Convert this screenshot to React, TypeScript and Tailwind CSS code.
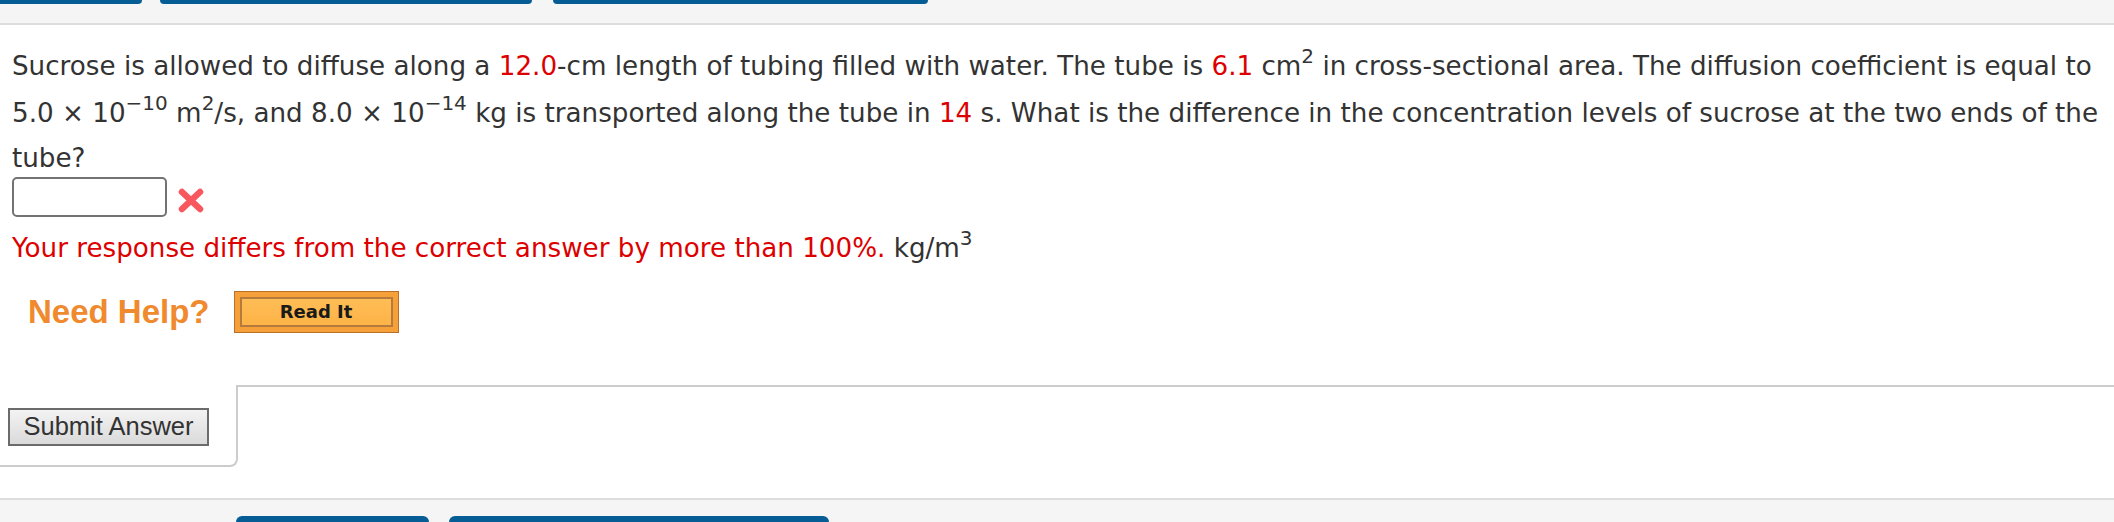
import React from 'react'

const text = "font-['DejaVu_Sans',Verdana,sans-serif]"
const arial = "font-['Liberation_Sans',Arial,sans-serif]"

function Sup({ children }: { children: React.ReactNode }) {
  return <sup className="static align-[12px] text-[20px] leading-[30px]">{children}</sup>
}

function Red({ children }: { children: React.ReactNode }) {
  return <span className="text-[#dd0000]">{children}</span>
}

function WrongMark() {
  return (
    <svg width="28" height="25" viewBox="0 0 28 25" className="mt-[11px] ml-[10px] blur-[0.4px]">
      <path d="M5 4 L23 21 M23 4 L5 21" stroke="#f8585d" strokeWidth={6.5} strokeLinecap="round" />
    </svg>
  )
}

export default function App() {
  return (
    <div className="w-[2114px] h-[522px] bg-white overflow-hidden flex flex-col">
      {/* top nav strip, only tab bottoms visible */}
      <div className="h-[25px] shrink-0 bg-[#f5f5f5] border-b-2 border-[#dddddd] flex items-start">
        <div className="w-[142px] h-[4px] bg-[#065d95] rounded-br-[6px]" />
        <div className="w-[372px] h-[4px] bg-[#065d95] rounded-b-[6px] ml-[18px]" />
        <div className="w-[375px] h-[4px] bg-[#065d95] rounded-b-[6px] ml-[21px]" />
      </div>

      <div className={`${text} text-[26.2px] leading-[44.5px] text-[#333333] px-3`}>
        <p className="mt-[15.5px] whitespace-nowrap">
          Sucrose is allowed to diffuse along a <Red>12.0</Red>-cm length of tubing filled with water. The tube is <Red>6.1</Red> cm<Sup>2</Sup> in cross-sectional area. The diffusion coefficient is equal to
          <br />
          5.0 × 10<Sup>−10</Sup> m<Sup>2</Sup>/s, and 8.0 × 10<Sup>−14</Sup> kg is transported along the tube in <Red>14</Red> s. What is the difference in the concentration levels of sucrose at the two ends of the
          <br />
          tube?
        </p>

        <div className="flex items-start -mt-[3px]">
          <input
            type="text"
            aria-label="answer"
            className="w-[155px] h-[40px] border-2 border-[#737373] rounded-[5px] bg-white"
          />
          <WrongMark />
        </div>

        <p className="mt-[5.5px] whitespace-nowrap">
          <Red>Your response differs from the correct answer by more than 100%.</Red> kg/m<Sup>3</Sup>
        </p>

        <div className="flex items-center h-[42px] mt-[20.5px] ml-4">
          <span className={`${arial} font-bold text-[33px] leading-none text-[#ef8a2e]`}>Need Help?</span>
          <button className="ml-[24px] w-[165px] h-[42px] border border-[#b8712a] bg-[#f6a03a] p-[5px]">
            <span className="flex items-center justify-center w-full h-full border-2 border-[#b57a3c] bg-gradient-to-b from-[#ffbd55] to-[#fdb347] font-['DejaVu_Sans',sans-serif] font-bold text-[18px] leading-none text-[#1a1a1a]">
              Read It
            </span>
          </button>
        </div>
      </div>

      {/* submit area */}
      <div className="flex mt-[52px]">
        <div className="w-[238px] shrink-0 border-r-2 border-b-2 border-[#cccccc] rounded-br-[8px] pl-2 pt-[23px] pb-[19px]">
          <button
            className={`${arial} w-[201px] h-[38px] border-2 border-[#6b6b6b] bg-gradient-to-b from-[#f3f3f3] to-[#dadada] text-[25.5px] leading-none text-[#333333]`}
          >
            Submit Answer
          </button>
        </div>
        <div className="flex-1 border-t-2 border-[#cccccc]" />
      </div>

      {/* bottom nav strip */}
      <div className="mt-[31px] flex-1 bg-[#f5f5f5] border-t-2 border-[#dddddd] flex items-start pt-4">
        <div className="w-[193px] h-[8px] bg-[#065d95] rounded-t-[6px] ml-[236px]" />
        <div className="w-[380px] h-[8px] bg-[#065d95] rounded-t-[6px] ml-[20px]" />
      </div>
    </div>
  )
}
